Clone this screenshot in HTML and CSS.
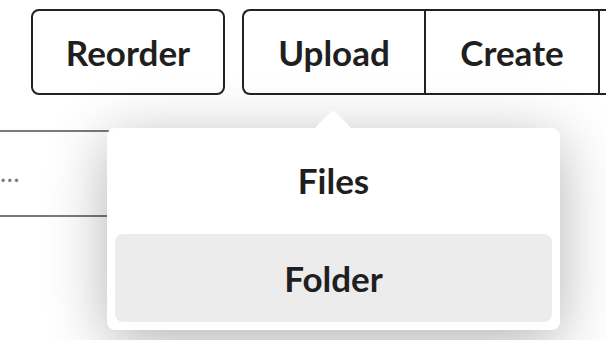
FILE: index.html
```html
<!DOCTYPE html>
<html lang="en">
<head>
    <meta charset="UTF-8">
    <meta name="viewport" content="width=device-width, initial-scale=1.0">
    <title>Upload menu</title>
    <link rel="stylesheet" href="styles.css">
</head>
<body>

<div class="toolbar">
    <button class="btn">Reorder</button>
    <div class="btn-group">
        <button class="btn-seg upload">Upload</button>
        <button class="btn-seg create">Create</button>
        <button class="btn-seg more"></button>
    </div>
</div>

<div class="list">
    <div class="list-row">
        <span class="row-text">…</span>
    </div>
</div>

<!-- Upload dropdown -->
<div class="popover">
    <div class="popover-item">Files</div>
    <div class="popover-item active">Folder</div>
</div>

</body>
</html>
```

FILE: styles.css
```css
body {
    font-family: 'Lato', 'Open Sans', sans-serif;
    margin: 0;
    padding: 0;
    background-color: #fff;
    color: #1f1f1f;
    width: 606px;
    height: 340px;
    overflow: hidden;
    position: relative;
}
.toolbar {
    display: flex;
    gap: 17px;
    padding: 9px 0 0 31px;
}
.btn, .btn-seg {
    font-family: inherit;
    font-size: 35px;
    font-weight: 700;
    color: #1f1f1f;
    background: #fff;
    height: 86px;
    cursor: pointer;
    flex-shrink: 0;
}
.btn {
    width: 194px;
    border: 2px solid #222;
    border-radius: 8px;
}
.btn-group {
    display: flex;
    flex-shrink: 0;
    border: 2px solid #222;
    border-right: none;
    border-radius: 8px 0 0 8px;
    height: 82px;
}
.btn-seg {
    height: 82px;
    border: none;
    background: transparent;
    padding: 0;
}
.upload {
    width: 182px;
    border-right: 2px solid #222;
    border-radius: 8px 0 0 8px;
}
.create {
    width: 174px;
    border-right: 2px solid #222;
}
.more {
    width: 20px;
}
.list {
    margin-top: 35px;
    width: 120px;
}
.list-row {
    border-top: 2px solid #7a7a7a;
    border-bottom: 2px solid #7a7a7a;
    height: 83px;
    display: flex;
    align-items: center;
}
.row-text {
    color: #7a7a7a;
    font-size: 26px;
    line-height: 1;
    margin-top: -4px;
}
.popover {
    position: absolute;
    left: 107px;
    top: 128px;
    width: 453px;
    box-sizing: border-box;
    padding: 8px;
    display: flex;
    flex-direction: column;
    gap: 10px;
    background: #fff;
    border-radius: 8px;
    box-shadow: 0 12px 60px rgba(0, 0, 0, 0.3);
    z-index: 2;
}
.popover::before {
    content: "";
    position: absolute;
    left: 213px;
    top: -13px;
    width: 26px;
    height: 26px;
    background: #fff;
    border-radius: 3px;
    transform: rotate(45deg);
}
.popover-item {
    position: relative;
    height: 88px;
    display: flex;
    align-items: center;
    justify-content: center;
    font-size: 35px;
    font-weight: 700;
    color: #1f1f1f;
    border-radius: 8px;
}
.popover-item.active {
    background: #ececec;
}
```
